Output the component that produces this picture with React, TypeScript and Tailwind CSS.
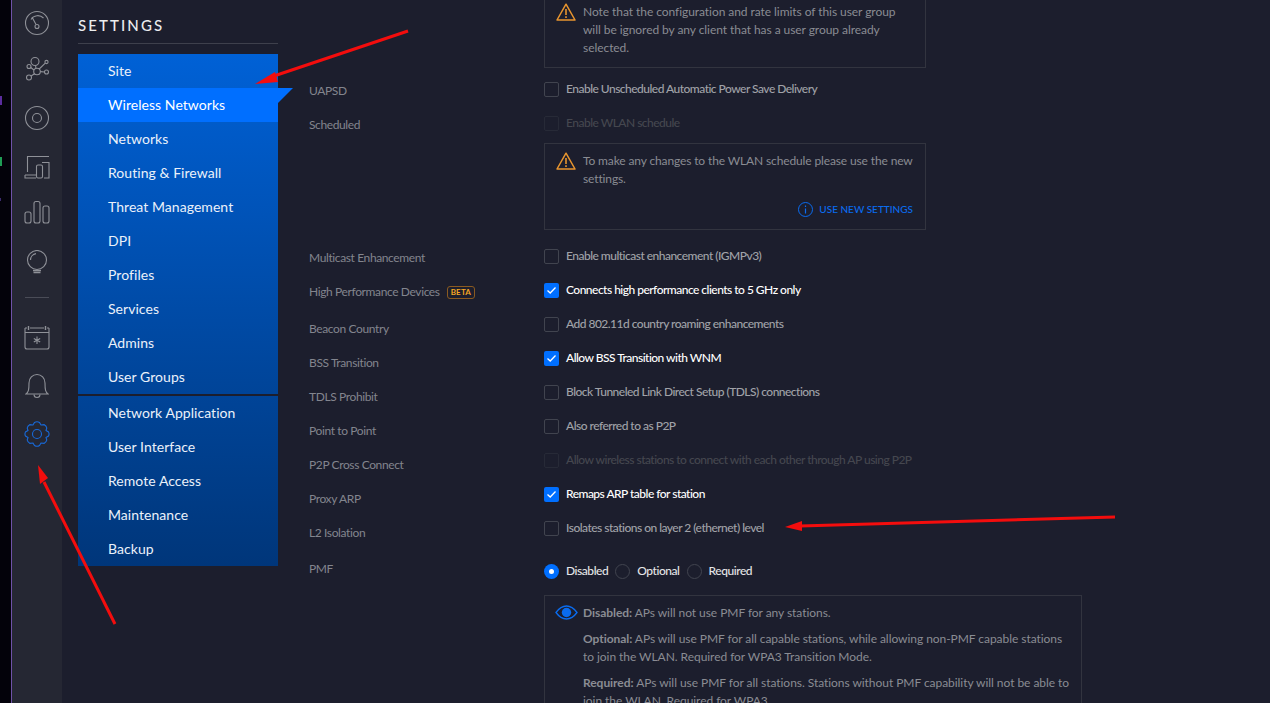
import React from 'react'

const menuTop = ['Site', 'Wireless Networks', 'Networks', 'Routing & Firewall', 'Threat Management', 'DPI', 'Profiles', 'Services', 'Admins', 'User Groups']
const menuBottom = ['Network Application', 'User Interface', 'Remote Access', 'Maintenance', 'Backup']

function Warning() {
  return (
    <svg width="20" height="18" viewBox="0 0 20 18" fill="none" className="shrink-0">
      <path d="M10 1.2 L19 17 H1 Z" stroke="#e8952f" strokeWidth="1.5" strokeLinejoin="round" />
      <path d="M10 6 V12" stroke="#e8952f" strokeWidth="1.6" />
      <path d="M10 13.3 V15" stroke="#e8952f" strokeWidth="1.6" />
    </svg>
  )
}

function Check({ state, label }: { state: 'off' | 'on' | 'dim'; label: string }) {
  return (
    <div className="flex items-center h-[34px]">
      {state === 'on' ? (
        <span className="w-[15px] h-[15px] rounded-[2px] bg-[#006fff] flex items-center justify-center shrink-0">
          <svg width="11" height="9" viewBox="0 0 11 9" fill="none">
            <path d="M1.5 4.5 L4.2 7 L9.5 1.5" stroke="#fff" strokeWidth="1.3" />
          </svg>
        </span>
      ) : (
        <span className={`w-[15px] h-[15px] rounded-[2px] border shrink-0 ${state === 'dim' ? 'border-[#272a37]' : 'border-[#41444f]'}`} />
      )}
      <span className={`ml-[7px] text-[12px] font-medium tracking-[-0.52px] whitespace-nowrap ${state === 'on' ? 'text-white' : state === 'dim' ? 'text-[#45474f]' : 'text-[#a0a2a8]'}`}>{label}</span>
    </div>
  )
}

function Row({ label, children, beta, low }: { label: string; children: React.ReactNode; beta?: boolean; low?: boolean }) {
  return (
    <div className="flex">
      <div className={`w-[235px] shrink-0 flex items-center h-[34px] text-[12px] tracking-[-0.38px] text-[#83858e] ${low ? 'pt-[10px]' : 'pt-[4px]'}`}>
        {label}
        {beta && <span className="ml-[7px] px-[3px] h-[13px] leading-[11px] text-[8px] font-bold tracking-[0.2px] text-[#f5a623] border border-[#8a5a20] rounded-[3px]">BETA</span>}
      </div>
      <div>{children}</div>
    </div>
  )
}

function Radio({ on, label }: { on?: boolean; label: string }) {
  return (
    <div className="flex items-center">
      {on ? (
        <span className="w-[15px] h-[15px] rounded-full bg-[#006fff] flex items-center justify-center">
          <span className="w-[5px] h-[5px] rounded-full bg-white" />
        </span>
      ) : (
        <span className="w-[15px] h-[15px] rounded-full border border-[#41444f]" />
      )}
      <span className="ml-[7px] text-[12px] font-medium tracking-[-0.45px] text-[#e4e5e7]">{label}</span>
    </div>
  )
}

export default function App() {
  return (
    <div className="relative h-[703px] w-[1270px] overflow-hidden flex bg-[#1c1e2d] text-[#999ba1]" style={{ fontFamily: 'Lato, "Noto Sans", sans-serif' }}>
      {/* desktop edge */}
      <div className="relative w-[12px] shrink-0 bg-[#03020a] border-r border-[#6f52a8]">
        <span className="absolute left-0 top-[96px] w-[2px] h-[9px] bg-[#5b2d9e]" />
        <span className="absolute left-0 top-[157px] w-[2px] h-[9px] bg-[#1f9d55]" />
        <span className="absolute left-0 top-[198px] w-[1px] h-[3px] bg-[#3d2b70]" />
      </div>

      {/* icon rail */}
      <aside className="w-[50px] shrink-0 bg-[#252733] flex flex-col items-center pt-[10px] text-[#8f9198]">
        <svg width="26" height="26" viewBox="0 0 26 26" fill="none" stroke="currentColor" strokeWidth="1.1">
          <circle cx="13" cy="13" r="11.5" />
          <circle cx="13" cy="16.5" r="2" />
          <path d="M12 14.5 L8 7 M7 9.5 A 8 8 0 0 1 19.5 8" />
        </svg>
        <svg className="mt-[20px]" width="26" height="28" viewBox="0 0 26 28" fill="none" stroke="currentColor" strokeWidth="1.1">
          <circle cx="13" cy="15.5" r="3.3" /><circle cx="11" cy="5.5" r="4" /><circle cx="5" cy="10.5" r="2" /><circle cx="22.5" cy="6" r="1.6" />
          <circle cx="22.5" cy="16" r="2" /><circle cx="5" cy="21.5" r="2.5" />
          <path d="M12 12.3 L11.5 9.5 M6.8 11.5 L10 14 M15.2 13 L21.3 7.2 M16.3 15.6 L20.5 16 M10.6 17.8 L7 20" />
        </svg>
        <svg className="mt-[21px]" width="26" height="26" viewBox="0 0 26 26" fill="none" stroke="currentColor" strokeWidth="1.1">
          <circle cx="13" cy="13" r="11.5" /><circle cx="13" cy="13" r="4.5" />
        </svg>
        <svg className="mt-[24px]" width="26" height="24" viewBox="0 0 26 24" fill="none" stroke="currentColor" strokeWidth="1.1">
          <path d="M3.5 17 V1.5 H25 M1 20 H12 M1 20 V23 H12" />
          <rect x="12.5" y="10" width="6" height="13" rx="1.5" />
          <path d="M18 7.5 H25 V23 H20" />
        </svg>
        <svg className="mt-[21px]" width="26" height="24" viewBox="0 0 26 24" fill="none" stroke="currentColor" strokeWidth="1.1">
          <rect x="1" y="12" width="6" height="11" rx="2" /><rect x="10" y="1.5" width="6" height="21.5" rx="2" /><rect x="19" y="6" width="6" height="17" rx="2" />
        </svg>
        <svg className="mt-[26px]" width="24" height="24" viewBox="0 0 24 24" fill="none" stroke="currentColor" strokeWidth="1.1">
          <circle cx="12" cy="10" r="9.5" /><path d="M5.5 10 A 6.5 6.5 0 0 1 11 3.6" strokeWidth="1.2" />
          <path d="M8 20.5 H16 M8.5 22.5 H15.5" strokeWidth="1.3" />
        </svg>
        <div className="mt-[23px] w-[24px] h-px bg-[#4a4c57]" />
        <svg className="mt-[27px]" width="26" height="25" viewBox="0 0 26 25" fill="none" stroke="currentColor" strokeWidth="1.1">
          <path d="M1 7.5 H25 M6 3 H20 M1 3 H3 M23 3 H25 M25 3 V22 A 2 2 0 0 1 23 24 H3 A 2 2 0 0 1 1 22 V3" />
          <path d="M4.5 1 V5 M21.5 1 V5" strokeWidth="1.4" />
          <path d="M13 11.5 V19 M9.8 13.4 L16.2 17.1 M16.2 13.4 L9.8 17.1" />
        </svg>
        <svg className="mt-[23px]" width="24" height="26" viewBox="0 0 24 26" fill="none" stroke="currentColor" strokeWidth="1.1">
          <path d="M1 21 C 3.5 19 4 17 4 10 A 8 8.5 0 0 1 20 10 C 20 17 20.5 19 23 21 Z" />
          <path d="M9 21.5 A 3 3 0 0 0 15 21.5" />
        </svg>
        <svg className="mt-[22px]" width="26" height="26" viewBox="0 0 26 26" fill="none" stroke="#1869d8" strokeWidth="1.1">
          <circle cx="13" cy="13" r="4.5" />
          <path d="M10.5 1.5 Q13 0 15.5 1.5 L17 4 L20 3.6 Q22.5 5 22.8 7 L22 9.5 L24.5 11 Q25.6 13 24.5 15 L22 16.5 L22.8 19 Q22.5 21 20 22.4 L17 22 L15.5 24.5 Q13 26 10.5 24.5 L9 22 L6 22.4 Q3.5 21 3.2 19 L4 16.5 L1.5 15 Q0.4 13 1.5 11 L4 9.5 L3.2 7 Q3.5 5 6 3.6 L9 4 Z" />
        </svg>
      </aside>

      {/* settings menu */}
      <nav className="w-[247px] shrink-0 pl-[16px] pr-[31px]">
        <h1 className="pt-[14px] h-[44px] text-[15px] font-medium tracking-[2.1px] text-[#eceded] border-b border-[#3e404c]">SETTINGS</h1>
        <div className="mt-[10px] w-[200px] bg-gradient-to-b from-[#0061d6] to-[#00367a]">
          <div>
            {menuTop.map((item) => (
              <div key={item} className={`relative h-[34px] pl-[30px] pb-[2px] flex items-center text-[14px] tracking-[0.05px] ${item === 'Wireless Networks' ? 'bg-[#006fff] text-white' : 'text-[#ebf1fa]'}`}>
                {item}
                {item === 'Wireless Networks' && <span className="absolute left-full top-0 w-0 h-0 border-t-[15px] border-t-[#006fff] border-r-[15px] border-r-transparent" />}
              </div>
            ))}
          </div>
          <div className="h-[2px] bg-[#1c1e2d]" />
          <div>
            {menuBottom.map((item) => (
              <div key={item} className="h-[34px] pl-[30px] pb-[2px] flex items-center text-[14px] tracking-[0.05px] text-[#ebf1fa]">{item}</div>
            ))}
          </div>
        </div>
      </nav>

      {/* form */}
      <main className="flex-1 -mt-[15px]">
        <div className="ml-[235px] w-[382px] h-[83px] border border-[#32343f] pl-[38px] pr-[11px] pt-[17px] relative text-[12px] leading-[18px] tracking-[-0.06px] text-[#8a8c93]">
          <span className="absolute left-[11px] top-[17px]"><Warning /></span>
          Note that the configuration and rate limits of this user group will be ignored by any client that has a user group already selected.
        </div>
        <div className="mt-[4px]">
          <Row label="UAPSD"><Check state="off" label="Enable Unscheduled Automatic Power Save Delivery" /></Row>
          <Row label="Scheduled"><Check state="dim" label="Enable WLAN schedule" /></Row>
        </div>
        <div className="ml-[235px] mt-[3px] w-[382px] h-[87px] border border-[#32343f] pl-[38px] pr-[8px] pt-[8px] relative text-[12px] leading-[18px] tracking-[-0.13px] text-[#8a8c93]">
          <span className="absolute left-[11px] top-[8px]"><Warning /></span>
          To make any changes to the WLAN schedule please use the new settings.
          <div className="absolute right-[12px] bottom-[11px] flex items-center text-[#0a6cf0] text-[10px] font-medium tracking-normal">
            <svg width="15" height="15" viewBox="0 0 15 15" fill="none" stroke="currentColor" className="mr-[6px]">
              <circle cx="7.5" cy="7.5" r="7" /><path d="M7.5 6.5 V11.5 M7.5 3.5 V5" strokeWidth="1.2" />
            </svg>
            USE NEW SETTINGS
          </div>
        </div>
        <div className="mt-[9px]">
          <Row label="Multicast Enhancement"><Check state="off" label="Enable multicast enhancement (IGMPv3)" /></Row>
          <Row label="High Performance Devices" beta><Check state="on" label="Connects high performance clients to 5 GHz only" /></Row>
          <Row low label="Beacon Country"><Check state="off" label="Add 802.11d country roaming enhancements" /></Row>
          <Row low label="BSS Transition"><Check state="on" label="Allow BSS Transition with WNM" /></Row>
          <Row low label="TDLS Prohibit"><Check state="off" label="Block Tunneled Link Direct Setup (TDLS) connections" /></Row>
          <Row low label="Point to Point"><Check state="off" label="Also referred to as P2P" /></Row>
          <Row low label="P2P Cross Connect"><Check state="dim" label="Allow wireless stations to connect with each other through AP using P2P" /></Row>
          <Row low label="Proxy ARP"><Check state="on" label="Remaps ARP table for station" /></Row>
          <Row low label="L2 Isolation"><Check state="off" label="Isolates stations on layer 2 (ethernet) level" /></Row>
        </div>
        <div className="flex mt-[9px] h-[34px] items-center">
          <div className="w-[235px] text-[12px] tracking-[-0.38px] text-[#83858e] -mt-[4px]">PMF</div>
          <div className="flex gap-[7px]"><Radio on label="Disabled" /><Radio label="Optional" /><Radio label="Required" /></div>
        </div>
        <div className="ml-[235px] mt-[7px] w-[538px] h-[140px] border border-[#32343f] pl-[38px] pr-[8px] pt-[8px] relative text-[12px] leading-[18px] tracking-[-0.05px] text-[#8a8c93]">
          <svg className="absolute left-[10px] top-[9px]" width="23" height="15" viewBox="0 0 23 15" fill="none">
            <path d="M1 7.5 C 5 2 8 1 11.5 1 C 15 1 18 2 22 7.5 C 18 13 15 14 11.5 14 C 8 14 5 13 1 7.5 Z" stroke="#0a6cf0" strokeWidth="1.3" />
            <circle cx="11.5" cy="7.5" r="4.7" fill="#0a6cf0" />
          </svg>
          <p><b className="font-bold">Disabled:</b> APs will not use PMF for any stations.</p>
          <p className="mt-[8px]"><b className="font-bold">Optional:</b> APs will use PMF for all capable stations, while allowing non-PMF capable stations to join the WLAN. Required for WPA3 Transition Mode.</p>
          <p className="mt-[8px]"><b className="font-bold">Required:</b> APs will use PMF for all stations. Stations without PMF capability will not be able to join the WLAN. Required for WPA3.</p>
        </div>
      </main>

      {/* annotation arrows */}
      <svg className="absolute left-0 top-0 pointer-events-none" width="1270" height="703" viewBox="0 0 1270 703" fill="none">
        <path d="M408 31 L268 78" stroke="#f30d0d" strokeWidth="3" />
        <path d="M255 84 L275 72 L278 82 Z" fill="#f30d0d" />
        <path d="M115 624 L44 482" stroke="#f30d0d" strokeWidth="3" />
        <path d="M38 465 L48 478 L40 484 Z" fill="#f30d0d" />
        <path d="M1115 517 L800 526" stroke="#f30d0d" strokeWidth="3" />
        <path d="M785 527 L802 521 L802 531 Z" fill="#f30d0d" />
      </svg>
    </div>
  )
}
